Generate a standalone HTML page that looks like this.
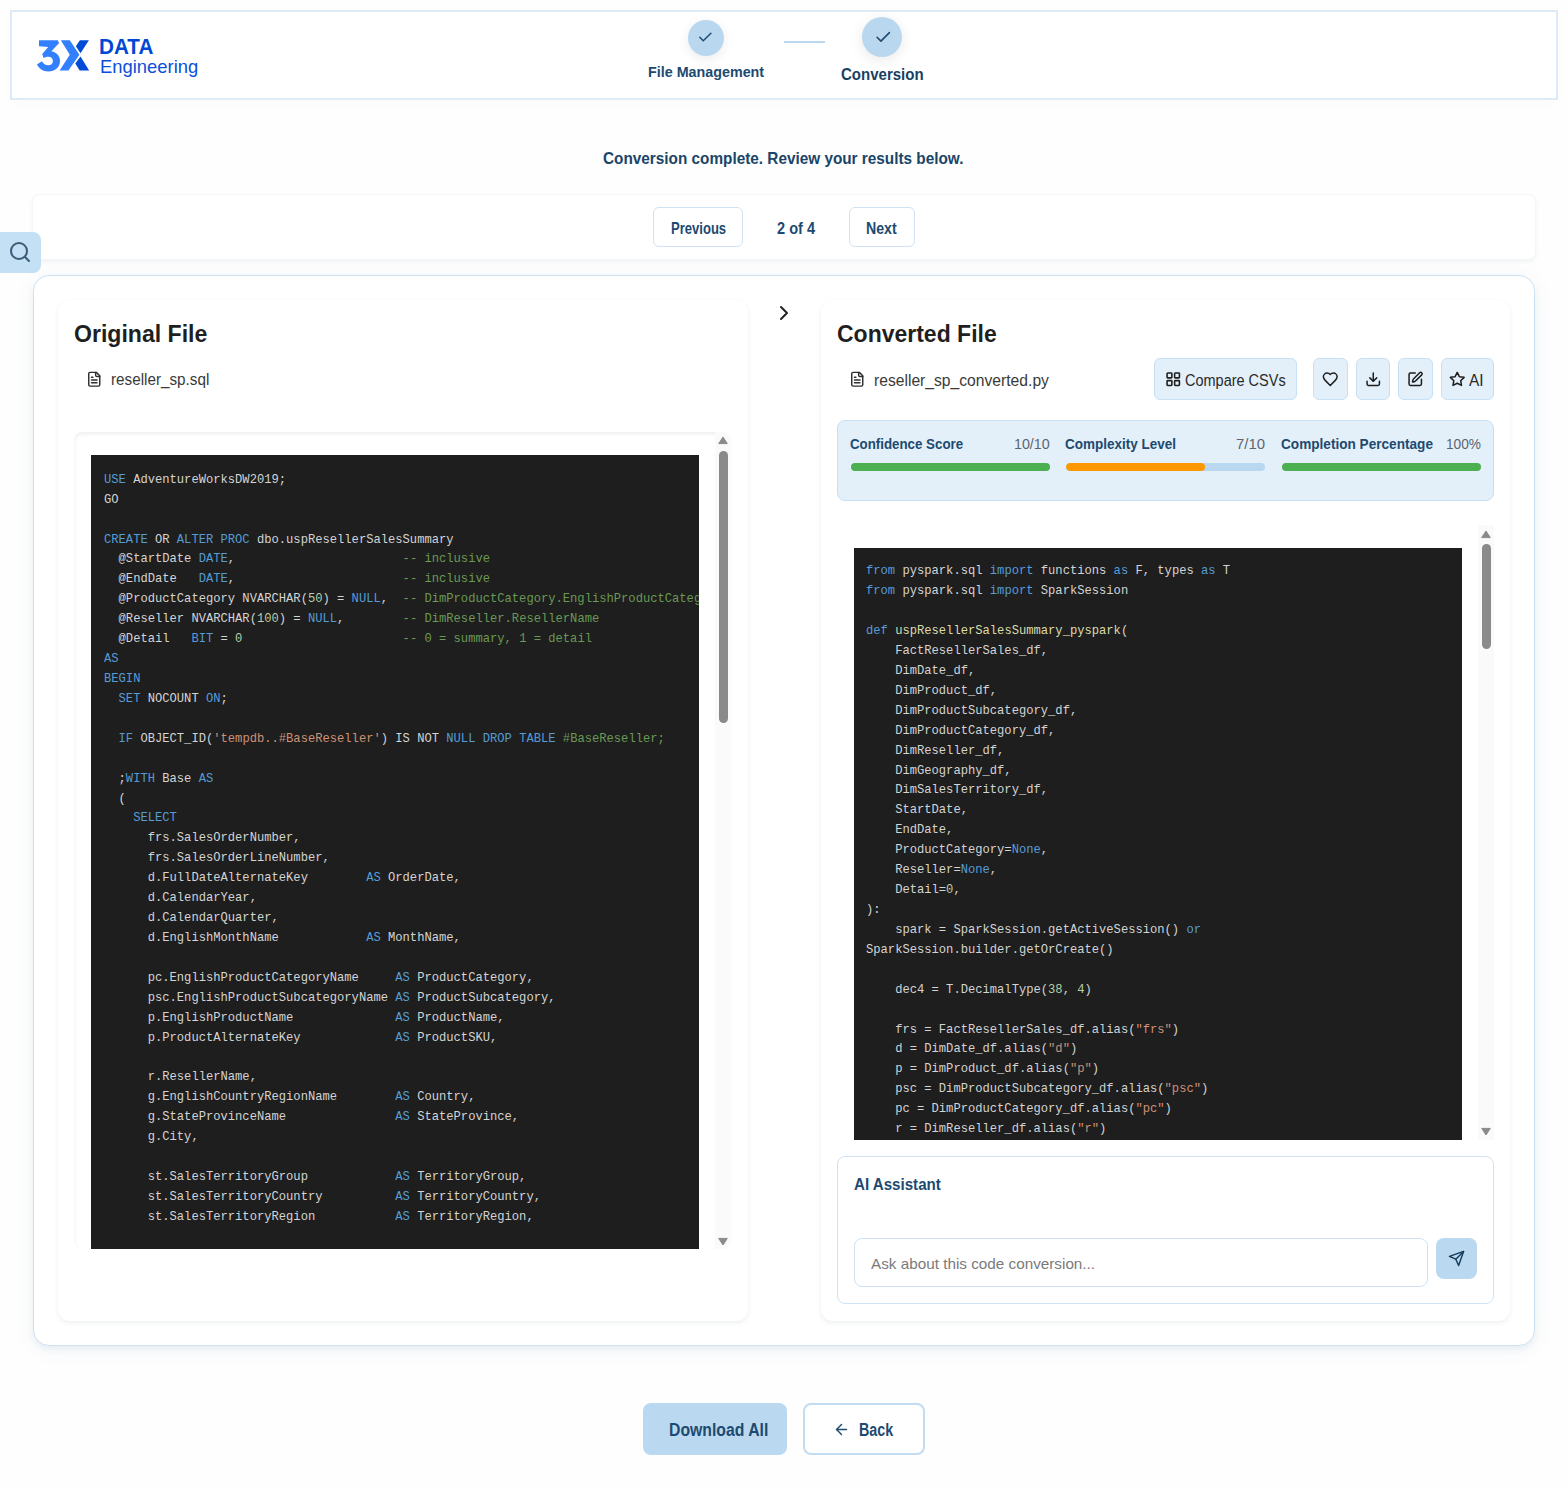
<!DOCTYPE html>
<html><head><meta charset="utf-8">
<style>
html,body{margin:0;padding:0;}
body{width:1568px;height:1488px;position:relative;overflow:hidden;background:#fefefe;font-family:"Liberation Sans",sans-serif;}
.a{position:absolute;box-sizing:border-box;}
.t{position:absolute;white-space:pre;line-height:1;transform-origin:0 0;}
.ic{position:absolute;overflow:visible;}
pre{margin:0;font-family:"Liberation Mono",monospace;font-size:13.28px;line-height:19.92px;color:#d4d4d4;white-space:pre;transform-origin:0 0;position:absolute;}
</style></head><body>
<!-- header -->
<div class="a" style="left:10px;top:10px;width:1548px;height:90px;background:#fff;border:2px solid #dcebf7;box-shadow:0 3px 12px rgba(0,0,0,0.02);"></div>
<svg class="ic" style="left:36px;top:39px;width:54px;height:33px" viewBox="0 0 54 33">
<path fill="#3380ff" d="M3 1.2H21.7L23.1 3.9 15.4 12.3C20.6 13.3 24 17 24 21.9 24 28 19.2 32.4 12.2 32.4 7.3 32.4 3.4 30.1 0.9 25.5L5.9 22.3C7.5 24.8 9.6 26.3 12.2 26.3 15 26.3 16.9 24.4 16.9 21.9 16.9 19.3 14.9 17.7 12.2 17.7 10.3 17.7 8.9 18.3 7.6 19L6.2 15 12.2 7.9 3 7.3Z"/>
<path fill="#3380ff" d="M24.8 1.2H33.8L43.4 15.75 32.4 31.6H23.6L33.8 15.75Z"/>
<path fill="#004bd6" d="M43.9 1.2H52.9L44.5 14.2 39.9 7.3Z"/>
<path fill="#004bd6" d="M44.5 17.5 53.1 31.6H43.7L39.3 24.6Z"/>
</svg>
<!-- stepper -->
<div class="a" style="left:784px;top:40.5px;width:41px;height:2px;background:#b9d8f0;"></div>
<div class="a" style="left:688px;top:19.5px;width:36px;height:36px;border-radius:50%;background:#b9d8f0;box-shadow:0 3px 12px rgba(0,0,0,0.08);"></div>
<div class="a" style="left:862px;top:16.5px;width:40px;height:40px;border-radius:50%;background:#b9d8f0;box-shadow:0 3px 14px rgba(0,0,0,0.09);"></div>
<!-- pagination card -->
<div class="a" style="left:32px;top:194px;width:1504px;height:66px;background:#fff;border:1px solid #f4f6f8;border-radius:8px;box-shadow:0 2px 4px rgba(20,50,80,0.06);"></div>
<div class="a" style="left:653px;top:207px;width:90px;height:40px;background:#fff;border:1px solid #cfe3f4;border-radius:6px;"></div>
<div class="a" style="left:849px;top:207px;width:66px;height:40px;background:#fff;border:1px solid #cfe3f4;border-radius:6px;"></div>
<!-- search tab -->
<div class="a" style="left:0px;top:232px;width:41px;height:41px;background:#c4e0f4;border-radius:0 8px 8px 0;"></div>
<!-- main card -->
<div class="a" style="left:33px;top:275px;width:1502px;height:1071px;background:#fff;border:1px solid #cde2f3;border-radius:16px;box-shadow:0 3px 6px rgba(20,60,100,0.06),0 4px 22px rgba(30,80,130,0.06);"></div>
<!-- left panel -->
<div class="a" style="left:58px;top:300px;width:690px;height:1021px;background:#fff;border-radius:12px;box-shadow:0 2px 5px rgba(20,50,80,0.08);"></div>
<!-- right panel -->
<div class="a" style="left:821px;top:300px;width:689px;height:1021px;background:#fff;border-radius:12px;box-shadow:0 2px 5px rgba(20,50,80,0.08);"></div>
<!-- left code container -->
<div class="a" style="left:74px;top:432px;width:657px;height:817px;background:#fff;border-radius:8px;overflow:hidden;box-shadow:inset 0 2px 4px rgba(0,0,0,0.07);">
  <div class="a" style="left:17px;top:23px;width:608px;height:860px;background:#1e1e1e;overflow:hidden;">
    <pre style="left:12.8px;top:14.8px;transform:scaleX(0.9148);"><span style="color:#569cd6">USE</span> AdventureWorksDW2019;
GO

<span style="color:#569cd6">CREATE</span> OR <span style="color:#569cd6">ALTER PROC</span> dbo.uspResellerSalesSummary
  @StartDate <span style="color:#569cd6">DATE</span>,                       <span style="color:#6a9955">-- inclusive</span>
  @EndDate   <span style="color:#569cd6">DATE</span>,                       <span style="color:#6a9955">-- inclusive</span>
  @ProductCategory NVARCHAR(<span style="color:#b5cea8">50</span>) = <span style="color:#569cd6">NULL</span>,  <span style="color:#6a9955">-- DimProductCategory.EnglishProductCategoryName</span>
  @Reseller NVARCHAR(<span style="color:#b5cea8">100</span>) = <span style="color:#569cd6">NULL</span>,        <span style="color:#6a9955">-- DimReseller.ResellerName</span>
  @Detail   <span style="color:#569cd6">BIT</span> = <span style="color:#b5cea8">0</span>                      <span style="color:#6a9955">-- 0 = summary, 1 = detail</span>
<span style="color:#569cd6">AS</span>
<span style="color:#569cd6">BEGIN</span>
  <span style="color:#569cd6">SET</span> NOCOUNT <span style="color:#569cd6">ON</span>;

  <span style="color:#569cd6">IF</span> OBJECT_ID(<span style="color:#ce9178">&#x27;tempdb..#BaseReseller&#x27;</span>) IS NOT <span style="color:#569cd6">NULL DROP TABLE</span> <span style="color:#6a9955">#BaseReseller;</span>

  ;<span style="color:#569cd6">WITH</span> Base <span style="color:#569cd6">AS</span>
  (
    <span style="color:#569cd6">SELECT</span>
      frs.SalesOrderNumber,
      frs.SalesOrderLineNumber,
      d.FullDateAlternateKey        <span style="color:#569cd6">AS</span> OrderDate,
      d.CalendarYear,
      d.CalendarQuarter,
      d.EnglishMonthName            <span style="color:#569cd6">AS</span> MonthName,

      pc.EnglishProductCategoryName     <span style="color:#569cd6">AS</span> ProductCategory,
      psc.EnglishProductSubcategoryName <span style="color:#569cd6">AS</span> ProductSubcategory,
      p.EnglishProductName              <span style="color:#569cd6">AS</span> ProductName,
      p.ProductAlternateKey             <span style="color:#569cd6">AS</span> ProductSKU,

      r.ResellerName,
      g.EnglishCountryRegionName        <span style="color:#569cd6">AS</span> Country,
      g.StateProvinceName               <span style="color:#569cd6">AS</span> StateProvince,
      g.City,

      st.SalesTerritoryGroup            <span style="color:#569cd6">AS</span> TerritoryGroup,
      st.SalesTerritoryCountry          <span style="color:#569cd6">AS</span> TerritoryCountry,
      st.SalesTerritoryRegion           <span style="color:#569cd6">AS</span> TerritoryRegion,
</pre>
  </div>
  <div class="a" style="left:641px;top:0;width:16px;height:817px;background:#fafafa;"></div>
  <div class="a" style="left:645px;top:19px;width:9px;height:272px;background:#8a8a8a;border-radius:5px;"></div>
  <svg class="ic" style="left:644px;top:4px;width:10px;height:9px" viewBox="0 0 10 9"><path d="M5 1 L9.3 7.6 H0.7Z" fill="#8a8a8a" stroke="#8a8a8a" stroke-width="1" stroke-linejoin="round"/></svg>
  <svg class="ic" style="left:644px;top:805px;width:10px;height:9px" viewBox="0 0 10 9"><path d="M5 8 L9.3 1.4 H0.7Z" fill="#8a8a8a" stroke="#8a8a8a" stroke-width="1" stroke-linejoin="round"/></svg>
</div>
<!-- buttons right -->
<div class="a" style="left:1154px;top:358px;width:143px;height:42px;background:#e4f0f9;border:1.5px solid #c8e0f3;border-radius:6px;"></div>
<div class="a" style="left:1313px;top:358px;width:34.5px;height:42px;background:#e4f0f9;border:1.5px solid #c8e0f3;border-radius:6px;"></div>
<div class="a" style="left:1355.5px;top:358px;width:34.5px;height:42px;background:#e4f0f9;border:1.5px solid #c8e0f3;border-radius:6px;"></div>
<div class="a" style="left:1398px;top:358px;width:34.5px;height:42px;background:#e4f0f9;border:1.5px solid #c8e0f3;border-radius:6px;"></div>
<div class="a" style="left:1440.5px;top:358px;width:53px;height:42px;background:#e4f0f9;border:1.5px solid #c8e0f3;border-radius:6px;"></div>
<!-- metrics -->
<div class="a" style="left:837px;top:420px;width:657px;height:80.5px;background:#e4f0f9;border:1px solid #c8e0f3;border-radius:8px;"></div>
<div class="a" style="left:850.8px;top:463px;width:199px;height:8px;background:#4caf50;border-radius:4px;"></div>
<div class="a" style="left:1066px;top:463px;width:199px;height:8px;background:#b9d8f0;border-radius:4px;overflow:hidden;"><div class="a" style="left:0;top:0;width:139.3px;height:8px;background:#ff9800;border-radius:4px;"></div></div>
<div class="a" style="left:1281.5px;top:463px;width:199px;height:8px;background:#4caf50;border-radius:4px;"></div>
<!-- right code container -->
<div class="a" style="left:837px;top:525px;width:657px;height:615px;background:#fff;overflow:hidden;">
  <div class="a" style="left:16.5px;top:23px;width:608.5px;height:700px;background:#1e1e1e;overflow:hidden;">
    <pre style="left:12.8px;top:13.3px;transform:scaleX(0.9148);"><span style="color:#569cd6">from</span> pyspark.sql <span style="color:#569cd6">import</span> functions <span style="color:#569cd6">as</span> F, types <span style="color:#569cd6">as</span> T
<span style="color:#569cd6">from</span> pyspark.sql <span style="color:#569cd6">import</span> SparkSession

<span style="color:#569cd6">def</span> <span style="color:#dcdcaa">uspResellerSalesSummary_pyspark</span>(
    FactResellerSales_df,
    DimDate_df,
    DimProduct_df,
    DimProductSubcategory_df,
    DimProductCategory_df,
    DimReseller_df,
    DimGeography_df,
    DimSalesTerritory_df,
    StartDate,
    EndDate,
    ProductCategory=<span style="color:#569cd6">None</span>,
    Reseller=<span style="color:#569cd6">None</span>,
    Detail=<span style="color:#b5cea8">0</span>,
):
    spark = SparkSession.getActiveSession() <span style="color:#569cd6">or</span>
SparkSession.builder.getOrCreate()

    dec4 = T.DecimalType(<span style="color:#b5cea8">38</span>, <span style="color:#b5cea8">4</span>)

    frs = FactResellerSales_df.alias(<span style="color:#ce9178">&quot;frs&quot;</span>)
    d = DimDate_df.alias(<span style="color:#ce9178">&quot;d&quot;</span>)
    p = DimProduct_df.alias(<span style="color:#ce9178">&quot;p&quot;</span>)
    psc = DimProductSubcategory_df.alias(<span style="color:#ce9178">&quot;psc&quot;</span>)
    pc = DimProductCategory_df.alias(<span style="color:#ce9178">&quot;pc&quot;</span>)
    r = DimReseller_df.alias(<span style="color:#ce9178">&quot;r&quot;</span>)
    g = DimGeography_df.alias(<span style="color:#ce9178">&quot;g&quot;</span>)</pre>
  </div>
  <div class="a" style="left:641px;top:0;width:16px;height:615px;background:#fafafa;"></div>
  <div class="a" style="left:644.5px;top:19px;width:9px;height:105px;background:#8a8a8a;border-radius:5px;"></div>
  <svg class="ic" style="left:644px;top:4.5px;width:10px;height:9px" viewBox="0 0 10 9"><path d="M5 1 L9.3 7.6 H0.7Z" fill="#8a8a8a" stroke="#8a8a8a" stroke-width="1" stroke-linejoin="round"/></svg>
  <svg class="ic" style="left:644px;top:602px;width:10px;height:9px" viewBox="0 0 10 9"><path d="M5 8 L9.3 1.4 H0.7Z" fill="#8a8a8a" stroke="#8a8a8a" stroke-width="1" stroke-linejoin="round"/></svg>
</div>
<!-- AI assistant -->
<div class="a" style="left:837px;top:1156px;width:657px;height:148px;background:#fff;border:1.5px solid #cfe3f4;border-radius:8px;"></div>
<div class="a" style="left:854px;top:1238px;width:574px;height:49px;background:#fff;border:1.5px solid #cfe3f4;border-radius:8px;"></div>
<div class="a" style="left:1436px;top:1238px;width:41px;height:41px;background:#bad9f0;border-radius:8px;"></div>
<!-- bottom buttons -->
<div class="a" style="left:643px;top:1403px;width:143.5px;height:52px;background:#bad9f0;border-radius:8px;"></div>
<div class="a" style="left:803px;top:1403px;width:122px;height:52px;background:#fff;border:2px solid #c3dcf1;border-radius:8px;"></div>
<svg class="ic" style="left:86.3px;top:370.5px;width:16.5px;height:16.5px;" viewBox="0 0 24 24" fill="none" stroke="#2e2e2e" stroke-width="2.1" stroke-linecap="round" stroke-linejoin="round"><path d="M15 2H6a2 2 0 0 0-2 2v16a2 2 0 0 0 2 2h12a2 2 0 0 0 2-2V7Z"/><path d="M14 2v4a2 2 0 0 0 2 2h4"/><path d="M10 9H8"/><path d="M16 13H8"/><path d="M16 17H8"/></svg>
<svg class="ic" style="left:849.2px;top:370.8px;width:16.5px;height:16.5px;" viewBox="0 0 24 24" fill="none" stroke="#2e2e2e" stroke-width="2.1" stroke-linecap="round" stroke-linejoin="round"><path d="M15 2H6a2 2 0 0 0-2 2v16a2 2 0 0 0 2 2h12a2 2 0 0 0 2-2V7Z"/><path d="M14 2v4a2 2 0 0 0 2 2h4"/><path d="M10 9H8"/><path d="M16 13H8"/><path d="M16 17H8"/></svg>
<svg class="ic" style="left:1164.5px;top:371px;width:16.5px;height:16.5px;" viewBox="0 0 24 24" fill="none" stroke="#1e1e1e" stroke-width="2.3" stroke-linecap="round" stroke-linejoin="round"><rect width="7" height="7" x="3" y="3" rx="1"/><rect width="7" height="7" x="14" y="3" rx="1"/><rect width="7" height="7" x="14" y="14" rx="1"/><rect width="7" height="7" x="3" y="14" rx="1"/></svg>
<svg class="ic" style="left:1322px;top:371px;width:16.5px;height:16.5px;" viewBox="0 0 24 24" fill="none" stroke="#1e1e1e" stroke-width="2.2" stroke-linecap="round" stroke-linejoin="round"><path d="M19 14c1.49-1.46 3-3.21 3-5.5A5.5 5.5 0 0 0 16.5 3c-1.76 0-3 .5-4.5 2-1.5-1.5-2.74-2-4.5-2A5.5 5.5 0 0 0 2 8.5c0 2.3 1.5 4.05 3 5.5l7 7Z"/></svg>
<svg class="ic" style="left:1365px;top:371px;width:16.5px;height:16.5px;" viewBox="0 0 24 24" fill="none" stroke="#1e1e1e" stroke-width="2.2" stroke-linecap="round" stroke-linejoin="round"><path d="M21 15v4a2 2 0 0 1-2 2H5a2 2 0 0 1-2-2v-4"/><polyline points="7 10 12 15 17 10"/><line x1="12" x2="12" y1="15" y2="3"/></svg>
<svg class="ic" style="left:1407px;top:371px;width:16.5px;height:16.5px;" viewBox="0 0 24 24" fill="none" stroke="#1e1e1e" stroke-width="2.2" stroke-linecap="round" stroke-linejoin="round"><path d="M12 3H5a2 2 0 0 0-2 2v14a2 2 0 0 0 2 2h14a2 2 0 0 0 2-2v-7"/><path d="M18.375 2.625a1 1 0 0 1 3 3l-9.013 9.014a2 2 0 0 1-.853.505l-2.873.84a.5.5 0 0 1-.62-.62l.84-2.873a2 2 0 0 1 .506-.852z"/></svg>
<svg class="ic" style="left:1449px;top:371px;width:16.5px;height:16.5px;" viewBox="0 0 24 24" fill="none" stroke="#1e1e1e" stroke-width="2.2" stroke-linecap="round" stroke-linejoin="round"><polygon points="12 2 15.09 8.26 22 9.27 17 14.14 18.18 21.02 12 17.77 5.82 21.02 7 14.14 2 9.27 8.91 8.26 12 2"/></svg>
<svg class="ic" style="left:1447.5px;top:1250px;width:17px;height:17px;" viewBox="0 0 24 24" fill="none" stroke="#143b5c" stroke-width="2" stroke-linecap="round" stroke-linejoin="round"><path d="m22 2-7 20-4-9-9-4Z"/><path d="M22 2 11 13"/></svg>
<svg class="ic" style="left:833px;top:1421px;width:17px;height:17px;" viewBox="0 0 24 24" fill="none" stroke="#1d4a70" stroke-width="2" stroke-linecap="round" stroke-linejoin="round"><path d="m12 19-7-7 7-7"/><path d="M19 12H5"/></svg>
<svg class="ic" style="left:8px;top:240px;width:24px;height:24px;" viewBox="0 0 24 24" fill="none" stroke="#3b5b78" stroke-width="2" stroke-linecap="round" stroke-linejoin="round"><circle cx="11" cy="11" r="8"/><path d="m21 21-4.3-4.3"/></svg>
<svg class="ic" style="left:697.25px;top:29.2px;width:16.7px;height:16.7px;" viewBox="0 0 24 24" fill="none" stroke="#1f4a6e" stroke-width="2.1" stroke-linecap="round" stroke-linejoin="round"><path d="M20 6 9 17l-5-5"/></svg>
<svg class="ic" style="left:873.75px;top:27.8px;width:18.5px;height:18.5px;" viewBox="0 0 24 24" fill="none" stroke="#1f4a6e" stroke-width="2.1" stroke-linecap="round" stroke-linejoin="round"><path d="M20 6 9 17l-5-5"/></svg>
<svg class="ic" style="left:772px;top:300.7px;width:24px;height:24px;" viewBox="0 0 24 24" fill="none" stroke="#222" stroke-width="2" stroke-linecap="round" stroke-linejoin="round"><path d="m9 18 6-6-6-6"/></svg>
<span class="t" style="left:99.10px;top:35.96px;font-size:21.66px;font-weight:700;color:#0047d4;transform:scaleX(0.9543);">DATA</span>
<span class="t" style="left:99.60px;top:58.56px;font-size:17.88px;font-weight:400;color:#0a4fd8;transform:scaleX(1.0314);">Engineering</span>
<span class="t" style="left:647.60px;top:64.62px;font-size:14.97px;font-weight:700;color:#1d4a70;transform:scaleX(0.9563);">File Management</span>
<span class="t" style="left:840.80px;top:66.77px;font-size:16.57px;font-weight:700;color:#173f62;transform:scaleX(0.9067);">Conversion</span>
<span class="t" style="left:603.30px;top:151.35px;font-size:16.72px;font-weight:700;color:#1a4468;transform:scaleX(0.9173);">Conversion complete. Review your results below.</span>
<span class="t" style="left:670.50px;top:220.01px;font-size:16.28px;font-weight:700;color:#1d4a70;transform:scaleX(0.8023);">Previous</span>
<span class="t" style="left:776.60px;top:220.01px;font-size:16.28px;font-weight:700;color:#1d4a70;transform:scaleX(0.8941);">2 of 4</span>
<span class="t" style="left:866.40px;top:220.01px;font-size:16.28px;font-weight:700;color:#1d4a70;transform:scaleX(0.8697);">Next</span>
<span class="t" style="left:73.90px;top:321.65px;font-size:24.27px;font-weight:700;color:#1f1f1f;transform:scaleX(0.9508);">Original File</span>
<span class="t" style="left:837.20px;top:321.68px;font-size:24.71px;font-weight:700;color:#1f1f1f;transform:scaleX(0.9307);">Converted File</span>
<span class="t" style="left:110.90px;top:371.39px;font-size:16.42px;font-weight:400;color:#3a3a3a;transform:scaleX(0.9292);">reseller_sp.sql</span>
<span class="t" style="left:873.80px;top:371.59px;font-size:16.42px;font-weight:400;color:#3a3a3a;transform:scaleX(0.9542);">reseller_sp_converted.py</span>
<span class="t" style="left:1184.80px;top:373.18px;font-size:15.84px;font-weight:400;color:#2a2a2a;transform:scaleX(0.9155);">Compare CSVs</span>
<span class="t" style="left:1469.40px;top:372.00px;font-size:17.01px;font-weight:400;color:#2a2a2a;transform:scaleX(0.9068);">AI</span>
<span class="t" style="left:849.80px;top:435.83px;font-size:15.55px;font-weight:700;color:#1d4a70;transform:scaleX(0.8555);">Confidence Score</span>
<span class="t" style="left:1013.50px;top:435.83px;font-size:15.55px;font-weight:400;color:#5a6570;transform:scaleX(0.9177);">10/10</span>
<span class="t" style="left:1065.00px;top:435.83px;font-size:15.55px;font-weight:700;color:#1d4a70;transform:scaleX(0.8671);">Complexity Level</span>
<span class="t" style="left:1235.90px;top:435.83px;font-size:15.55px;font-weight:400;color:#5a6570;transform:scaleX(0.9571);">7/10</span>
<span class="t" style="left:1280.80px;top:435.83px;font-size:15.55px;font-weight:700;color:#1d4a70;transform:scaleX(0.8751);">Completion Percentage</span>
<span class="t" style="left:1445.90px;top:435.83px;font-size:15.55px;font-weight:400;color:#5a6570;transform:scaleX(0.8794);">100%</span>
<span class="t" style="left:853.80px;top:1175.70px;font-size:17.01px;font-weight:700;color:#1d4a70;transform:scaleX(0.8893);">AI Assistant</span>
<span class="t" style="left:870.60px;top:1255.95px;font-size:15.41px;font-weight:400;color:#7a7a7a;transform:scaleX(0.9912);">Ask about this code conversion...</span>
<span class="t" style="left:668.70px;top:1421.63px;font-size:17.44px;font-weight:700;color:#1d4a70;transform:scaleX(0.9044);">Download All</span>
<span class="t" style="left:858.80px;top:1421.63px;font-size:17.44px;font-weight:700;color:#1d4a70;transform:scaleX(0.8201);">Back</span>
</body></html>
